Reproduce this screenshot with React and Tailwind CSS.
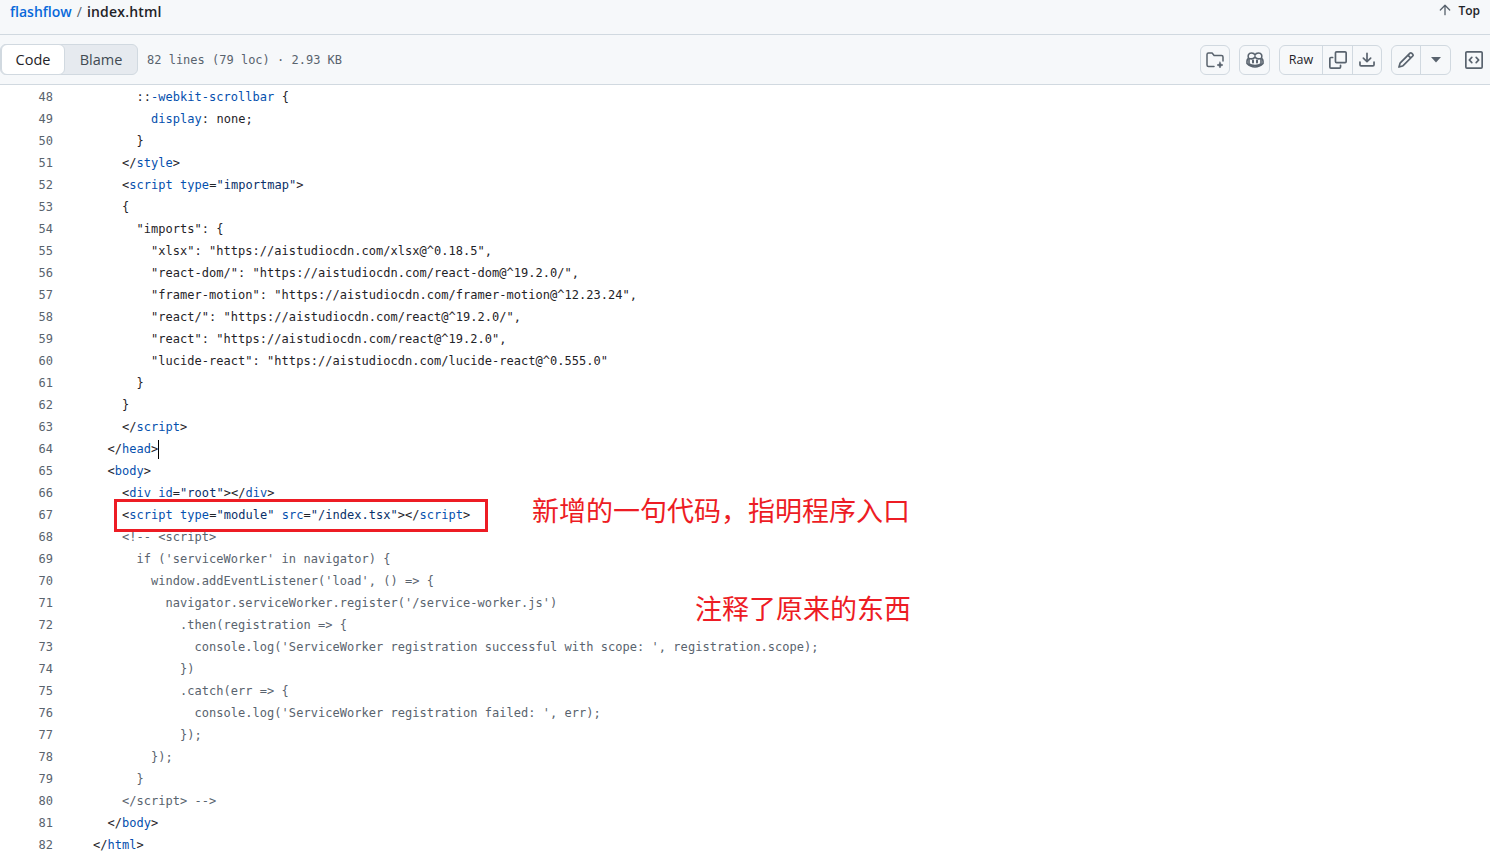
import { ArrowUp } from "lucide-react";

const lines = [
  "      ::-webkit-scrollbar {",
  "        display: none;",
  "      }",
  "    </style>",
  '    <script type="importmap">',
  "    {",
  '      "imports": {',
  '        "xlsx": "https://aistudiocdn.com/xlsx@^0.18.5",',
  '        "react-dom/": "https://aistudiocdn.com/react-dom@^19.2.0/",',
  '        "framer-motion": "https://aistudiocdn.com/framer-motion@^12.23.24",',
  '        "react/": "https://aistudiocdn.com/react@^19.2.0/",',
  '        "react": "https://aistudiocdn.com/react@^19.2.0",',
  '        "lucide-react": "https://aistudiocdn.com/lucide-react@^0.555.0"',
  "      }",
  "    }",
  "    </script>",
  "  </head>",
  "  <body>",
  '    <div id="root"></div>',
  '    <script type="module" src="/index.tsx"></script>',
  "    <!-- <script>",
  "      if ('serviceWorker' in navigator) {",
  "        window.addEventListener('load', () => {",
  "          navigator.serviceWorker.register('/service-worker.js')",
  "            .then(registration => {",
  "              console.log('ServiceWorker registration successful with scope: ', registration.scope);",
  "            })",
  "            .catch(err => {",
  "              console.log('ServiceWorker registration failed: ', err);",
  "            });",
  "        });",
  "      }",
  "    </script> -->",
  "  </body>",
  "</html>",
];

// rough tokenizer, only has to cover the markup in this file
function CodeText({ text, num }) {
  if (num >= 68 && num <= 80) return <span className="text-[#59636e]">{text}</span>;
  if (num >= 54 && num <= 62) return <span className="text-[#1f2328]">{text}</span>;
  const parts = text.split(/(<\/?|>|=|"[^"]*"|::|:|;|\{|\}|\s+)/).filter(Boolean);
  return parts.map((p, i) => {
    const dark = /^(<\/?|>|=|::|:|;|\{|\}|\s+|none)$/.test(p);
    const str = p.startsWith('"');
    return (
      <span key={i} className={str ? "text-[#0a3069]" : dark ? "text-[#1f2328]" : "text-[#0550ae]"}>
        {p}
      </span>
    );
  });
}

function FolderIcon() {
  return (
    <svg width="20" height="20" viewBox="0 0 20 20" fill="none" stroke="#59636e" strokeWidth="1.5" strokeLinejoin="round" strokeLinecap="round">
      <path d="M9 16.5H3.5A1.5 1.5 0 0 1 2 15V4.5A1.5 1.5 0 0 1 3.5 3h3.6l2 2.5h7.4A1.5 1.5 0 0 1 18 7v4" />
      <path d="M15 12l.9 2.1L18 15l-2.1.9L15 18l-.9-2.1L12 15l2.1-.9z" fill="#59636e" strokeWidth="0.6" />
    </svg>
  );
}

function CopilotIcon() {
  return (
    <svg width="20" height="20" viewBox="0 0 20 20" fill="none" stroke="#59636e" strokeWidth="1.6">
      <path d="M3.5 8.5C2.5 5.5 3.5 3 6.5 3c1.8 0 3 .8 3.5 2 .5-1.2 1.700-2 3.500-2 3 0 4 2.500 3 5.500" />
      <path d="M3.500 8.500c-1 .5-1.500 1.300-1.500 2.500v2.500c2 2 4.500 3.500 8 3.500s6-1.500 8-3.500V11c0-1.200-.5-2-1.500-2.500" />
      <path d="M4 8.500c3 1 4.500.5 6-1.500 1.500 2 3 2.500 6 1.500v5.500c-1.500 1-3.500 1.500-6 1.500s-4.500-.5-6-1.500z" />
      <path d="M8 10.500v2M12 10.500v2" strokeWidth="2" strokeLinecap="round" />
    </svg>
  );
}

function CopyIcon() {
  return (
    <svg width="18" height="18" viewBox="0 0 16 16" fill="#59636e">
      <path d="M0 6.750C0 5.784.784 5 1.750 5h1.500a.75.75 0 0 1 0 1.500h-1.500a.25.25 0 0 0-.25.25v7.500c0 .138.112.25.25.25h7.500a.25.25 0 0 0 .25-.25v-1.500a.75.75 0 0 1 1.500 0v1.500A1.750 1.750 0 0 1 9.250 16h-7.500A1.750 1.750 0 0 1 0 14.250Z" />
      <path d="M5 1.750C5 .784 5.784 0 6.750 0h7.500C15.216 0 16 .784 16 1.750v7.500A1.750 1.750 0 0 1 14.250 11h-7.500A1.750 1.750 0 0 1 5 9.250Zm1.750-.25a.25.25 0 0 0-.25.25v7.500c0 .138.112.25.25.25h7.500a.25.25 0 0 0 .25-.25v-7.500a.25.25 0 0 0-.25-.25Z" />
    </svg>
  );
}

function DownloadIcon() {
  return (
    <svg width="18" height="18" viewBox="0 0 16 16" fill="#59636e">
      <path d="M2.750 14A1.750 1.750 0 0 1 1 12.250v-2.500a.75.75 0 0 1 1.500 0v2.500c0 .138.112.25.25.25h10.500a.25.25 0 0 0 .25-.25v-2.500a.75.75 0 0 1 1.500 0v2.500A1.750 1.750 0 0 1 13.250 14Z" />
      <path d="M7.250 7.689V2a.75.75 0 0 1 1.500 0v5.689l1.970-1.969a.749.749 0 1 1 1.060 1.060l-3.250 3.250a.749.749 0 0 1-1.060 0L4.220 6.780a.749.749 0 1 1 1.060-1.060l1.970 1.969Z" />
    </svg>
  );
}

function PencilIcon() {
  return (
    <svg width="18" height="18" viewBox="0 0 16 16" fill="#59636e">
      <path d="M11.013 1.427a1.750 1.750 0 0 1 2.474 0l1.086 1.086a1.750 1.750 0 0 1 0 2.474l-8.610 8.610c-.21.21-.47.364-.756.445l-3.251.93a.75.75 0 0 1-.927-.928l.929-3.250c.081-.286.235-.547.445-.758l8.610-8.610Zm.176 4.823L9.750 4.810l-6.286 6.287a.253.253 0 0 0-.064.108l-.558 1.953 1.953-.558a.253.253 0 0 0 .108-.064Zm1.238-3.763a.25.25 0 0 0-.354 0L10.811 3.750l1.439 1.440 1.263-1.263a.25.25 0 0 0 0-.354Z" />
    </svg>
  );
}

function CodeSquareIcon() {
  return (
    <svg width="18" height="18" viewBox="0 0 16 16" fill="#59636e">
      <path d="M0 1.750C0 .784.784 0 1.750 0h12.500C15.216 0 16 .784 16 1.750v12.500A1.750 1.750 0 0 1 14.250 16H1.750A1.750 1.750 0 0 1 0 14.250Zm1.750-.25a.25.25 0 0 0-.25.25v12.500c0 .138.112.25.25.25h12.500a.25.25 0 0 0 .25-.25V1.750a.25.25 0 0 0-.25-.25Z" />
      <path d="M6.600 5.200a.75.75 0 0 1 0 1.060L4.860 8l1.740 1.740a.75.75 0 0 1-1.060 1.060L3.270 8.530a.75.75 0 0 1 0-1.060L5.540 5.200a.75.75 0 0 1 1.060 0Zm2.800 0a.75.75 0 0 1 1.060 0l2.270 2.270a.75.75 0 0 1 0 1.060l-2.270 2.270a.75.75 0 0 1-1.060-1.060L11.140 8 9.400 6.260a.75.75 0 0 1 0-1.060Z" />
    </svg>
  );
}

export default function App() {
  return (
    <div className="relative w-[1490px] h-[857px] overflow-hidden bg-white font-['Open_Sans','Noto_Sans',sans-serif]">
      <div className="h-[35px] bg-[#f6f8fa] border-b border-[#d1d9e0] flex justify-between pl-[10px] pr-[10px]">
        <div className="text-[14px] leading-[23px] font-semibold text-[#1f2328]">
          <span className="text-[#0969da]">flashflow</span>
          <span className="text-[#59636e] font-normal mx-[5px]">/</span>
          <span className="tracking-[0.2px]">index.html</span>
        </div>
        <div className="flex items-start gap-[5px] pt-[2px] text-[12px] font-semibold text-[#1f2328]">
          <ArrowUp size={16} color="#59636e" />
          <span className="leading-[18px]">Top</span>
        </div>
      </div>

      <div className="h-[50px] bg-[#f6f8fa] border-b border-[#d1d9e0] flex items-center">
        <div className="flex h-[31px] w-[138px] rounded-md bg-[#e6eaef] border border-[#d1d9e0] text-[14.5px] font-medium text-[#1f2328]">
          <div className="w-[64px] -my-px bg-white border border-[#d1d9e0] rounded-md flex items-center justify-center">Code</div>
          <div className="flex-1 flex items-center justify-center text-[#424a53]">Blame</div>
        </div>
        <div className="ml-[9px] pt-px text-[12px] text-[#59636e] font-['DejaVu_Sans_Mono',monospace]">82 lines (79 loc) · 2.93 KB</div>
        <div className="ml-auto flex items-center pr-[7px]">
          <div className="w-[30px] h-[30px] rounded-md border border-[#d1d9e0] flex items-center justify-center"><FolderIcon /></div>
          <div className="ml-[9px] w-[31px] h-[30px] rounded-md border border-[#d1d9e0] flex items-center justify-center"><CopilotIcon /></div>
          <div className="ml-[9px] h-[30px] rounded-md border border-[#d1d9e0] flex divide-x divide-[#d1d9e0]">
            <div className="w-[43px] pt-px flex items-center justify-center text-[12.5px] font-medium text-[#1f2328]">Raw</div>
            <div className="w-[30px] flex items-center justify-center"><CopyIcon /></div>
            <div className="w-[28px] flex items-center justify-center"><DownloadIcon /></div>
          </div>
          <div className="ml-[9px] h-[30px] rounded-md border border-[#d1d9e0] flex divide-x divide-[#d1d9e0]">
            <div className="w-[29px] flex items-center justify-center"><PencilIcon /></div>
            <div className="w-[29px] flex items-center justify-center">
              <svg width="10" height="6" viewBox="0 0 10 6" fill="#59636e"><path d="M0 0h10L5 5.500z" /></svg>
            </div>
          </div>
          <div className="ml-[14px] w-[18px] h-[18px]"><CodeSquareIcon /></div>
        </div>
      </div>

      <div className="pt-px text-[12px] leading-[22px] font-['DejaVu_Sans_Mono',monospace]">
        {lines.map((text, i) => {
          const num = i + 48;
          return (
            <div key={num} className="flex h-[22px] whitespace-pre">
              <div className="w-[53px] text-right text-[#59636e]">{num}</div>
              <div className="pl-[40px] relative tracking-[0.03px]">
                <CodeText text={text} num={num} />
                {num === 64 && <span className="absolute left-[105px] top-[2px] w-px h-[19px] bg-black" />}
              </div>
            </div>
          );
        })}
      </div>

      <div className="absolute left-[114px] top-[499px] w-[374px] h-[33px] border-[3px] border-[#ed1c24]" />
      <div className="absolute left-[532px] top-[491px] text-[27px] leading-[38px] text-[#ed1c24] whitespace-nowrap font-['Noto_Sans_CJK_SC',sans-serif]">新增的一句代码，指明程序入口</div>
      <div className="absolute left-[695px] top-[589px] text-[27px] leading-[38px] text-[#ed1c24] whitespace-nowrap font-['Noto_Sans_CJK_SC',sans-serif]">注释了原来的东西</div>
    </div>
  );
}
